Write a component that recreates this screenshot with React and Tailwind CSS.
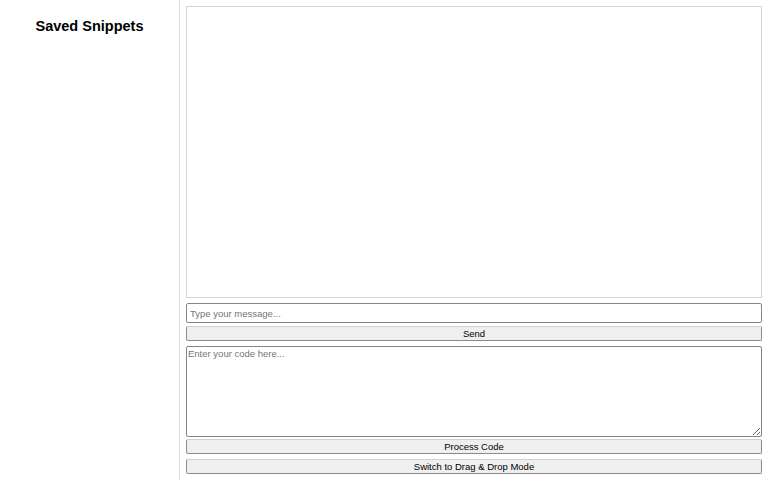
import React from "react";

const btn =
  "block w-full h-[15px] bg-[#efefef] border border-[#8a8a8a] border-t-[#cfcfcf] rounded-[2px] text-[9.5px] leading-[13px] text-black text-center";

const App = () => {
  return (
    <div
      className="flex h-[480px] w-[768px] bg-white text-black"
      style={{ fontFamily: '"Liberation Sans", Arial, sans-serif' }}
    >
      <aside className="w-[180px] shrink-0 border-r border-[#dddddd] pt-[17px]">
        <h2 className="text-center text-[14.5px] font-bold leading-[18px]">
          Saved Snippets
        </h2>
      </aside>
      <main className="flex flex-1 flex-col p-[6px] pb-0">
        <div className="h-[292px] w-full border border-[#d4d4d4]"></div>
        <input
          type="text"
          placeholder="Type your message..."
          className="mt-[5px] h-[20px] w-full rounded-[2px] border border-[#858585] px-[3px] text-[9.5px] placeholder:text-[#757575] outline-none"
        />
        <button className={`${btn} mt-[3px]`}>Send</button>
        <textarea
          placeholder="Enter your code here..."
          className="mt-[5px] h-[91px] w-full rounded-[2px] border border-[#858585] px-[1px] py-0 text-[9.5px] leading-[14px] placeholder:text-[#757575] outline-none"
        ></textarea>
        <button className={`${btn} mt-[2px]`}>Process Code</button>
        <button className={`${btn} mt-[5px]`}>Switch to Drag &amp; Drop Mode</button>
      </main>
    </div>
  );
};

export default App;
